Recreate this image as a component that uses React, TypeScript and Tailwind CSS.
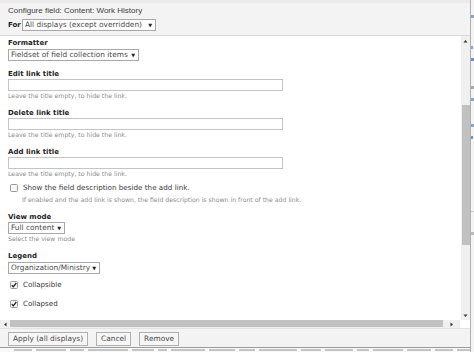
import React from "react";

const F = { fontFamily: '"DejaVu Sans", Verdana, sans-serif' };

function Select({ text, w }: { text: string; w: number }) {
  return (
    <div
      className="flex items-center justify-between h-[12px] border border-[#a8a8a8] bg-white pl-[2px] pr-[3px] text-[7.4px] leading-none text-[#4a4a4a]"
      style={{ width: w, ...F }}
    >
      <span className="whitespace-nowrap">{text}</span>
      <span className="text-[5px] text-[#222]">▼</span>
    </div>
  );
}

function Label({ children, mt }: { children: React.ReactNode; mt: string }) {
  return (
    <div className={`${mt} h-[10px] leading-[10px] text-[7px] font-bold text-[#262626]`} style={F}>
      {children}
    </div>
  );
}

function Desc({ children, cls = "" }: { children: React.ReactNode; cls?: string }) {
  return (
    <div className={`h-[10px] leading-[10px] text-[6.2px] text-[#8c8c8c] whitespace-nowrap ${cls}`} style={F}>
      {children}
    </div>
  );
}

function Input() {
  return <div className="h-[12px] w-[275px] border border-[#c4c4c4] bg-white" />;
}

function Check({ checked }: { checked: boolean }) {
  return (
    <svg width="8" height="8" viewBox="0 0 8 8" className="shrink-0">
      <rect x="0.5" y="0.5" width="7" height="7" rx="1" fill={checked ? "#f4f4f4" : "#f7f7f7"} stroke="#9a9a9a" />
      {checked && <path d="M1.8 4.2 L3.3 5.8 L6.3 2" stroke="#222" strokeWidth="1.3" fill="none" />}
    </svg>
  );
}

function Arrow({ dir }: { dir: "up" | "down" | "left" | "right" }) {
  const d =
    dir === "up"
      ? "M0.5 3.5 L2.5 1 L4.5 3.5 Z"
      : dir === "down"
      ? "M0.5 1.5 L2.5 4 L4.5 1.5 Z"
      : dir === "left"
      ? "M3.5 0.5 L1 2.5 L3.5 4.5 Z"
      : "M1.5 0.5 L4 2.5 L1.5 4.5 Z";
  return (
    <svg width="5" height="5" viewBox="0 0 5 5">
      <path d={d} fill="#333" />
    </svg>
  );
}

function Btn({ children }: { children: React.ReactNode }) {
  return (
    <div
      className="h-[14px] px-[4px] flex items-center border border-[#b0b0b0] bg-[#f6f6f6] text-[7.4px] text-[#4a4a4a] leading-none whitespace-nowrap"
      style={F}
    >
      {children}
    </div>
  );
}

export default function App() {
  const bottomDashes = [18, 30, 14, 40, 22, 9, 34, 26, 16, 38, 20, 28, 12, 30, 24, 18, 36, 22];
  return (
    <div className="w-[474px] h-[352px] overflow-hidden flex bg-[#f4f4f4]">
      <div className="w-[471px] shrink-0 flex flex-col border-r border-[#b0b0b0]">
        <div className="h-[3px] bg-[#ebebeb]" />
        <div className="h-[33px] bg-[#f3f3f3] border-b border-[#d9d9d9] px-[8px] pt-[3px]">
          <div
            className="h-[10px] leading-[10px] text-[8px] text-[#404040]"
            style={{ fontFamily: '"Liberation Sans", Arial, sans-serif' }}
          >
            Configure field: Content: Work History
          </div>
          <div className="mt-[3px] flex items-center gap-[2px]">
            <span className="text-[7px] font-bold text-[#222] w-[12px]" style={F}>
              For
            </span>
            <Select text="All displays (except overridden)" w={134} />
          </div>
        </div>
        <div className="h-[284px] flex bg-white">
          <div className="flex-1 pl-[8px] pt-[2px] flex flex-col">
            <Label mt="mt-0">Formatter</Label>
            <div className="mt-[1px]">
              <Select text="Fieldset of field collection items" w={131} />
            </div>
            <Label mt="mt-[8px]">Edit link title</Label>
            <Input />
            <Desc>Leave the title empty, to hide the link.</Desc>
            <Label mt="mt-[7px]">Delete link title</Label>
            <Input />
            <Desc>Leave the title empty, to hide the link.</Desc>
            <Label mt="mt-[7px]">Add link title</Label>
            <Input />
            <Desc>Leave the title empty, to hide the link.</Desc>
            <div className="mt-[4px] h-[10px] flex items-center pl-[2px] gap-[5px]">
              <Check checked={false} />
              <span className="text-[7.2px] text-[#383838] whitespace-nowrap" style={F}>
                Show the field description beside the add link.
              </span>
            </div>
            <Desc cls="mt-[2px] pl-[14px]">
              If enabled and the add link is shown, the field description is shown in front of the add link.
            </Desc>
            <Label mt="mt-[7px]">View mode</Label>
            <Select text="Full content" w={57} />
            <Desc cls="h-[9px] leading-[9px]">Select the view mode</Desc>
            <Label mt="mt-[7px]">Legend</Label>
            <div className="mt-[1px]">
              <Select text="Organization/Ministry" w={92} />
            </div>
            <div className="mt-[6px] h-[10px] flex items-center pl-[2px] gap-[5px]">
              <Check checked={true} />
              <span className="text-[7.1px] text-[#383838]" style={F}>
                Collapsible
              </span>
            </div>
            <div className="mt-[9px] h-[10px] flex items-center pl-[2px] gap-[5px]">
              <Check checked={true} />
              <span className="text-[7.1px] text-[#383838]" style={F}>
                Collapsed
              </span>
            </div>
          </div>
          <div className="w-[9px] bg-[#f0f0f0] flex flex-col items-center">
            <div className="h-[10px] flex items-center">
              <Arrow dir="up" />
            </div>
            <div className="mt-[59px] w-[8px] h-[140px] bg-[#c1c1c1]" />
            <div className="flex-1" />
            <div className="h-[10px] flex items-center">
              <Arrow dir="down" />
            </div>
          </div>
        </div>
        <div className="h-[8px] flex bg-[#f0f0f0]">
          <div className="w-[10px] flex items-center justify-center">
            <Arrow dir="left" />
          </div>
          <div className="w-[433px] h-[7px] bg-[#c1c1c1]" />
          <div className="flex-1 flex items-center justify-center">
            <Arrow dir="right" />
          </div>
          <div className="w-[10px] bg-white" />
        </div>
        <div className="h-[19px] bg-[#f3f3f3] border-t border-[#e2e2e2] pl-[8px] pt-[3px] flex gap-[8px]">
          <Btn>Apply (all displays)</Btn>
          <Btn>Cancel</Btn>
          <Btn>Remove</Btn>
        </div>
        <div className="h-[5px] border-t border-[#9a9a9a] bg-[#f8f8f8] flex items-start gap-[4px] pl-[14px] pt-[1px] overflow-hidden">
          {bottomDashes.map((w, i) => (
            <div key={i} className="h-[2px] bg-[#c4c4c4] shrink-0" style={{ width: w }} />
          ))}
        </div>
      </div>
      <div className="flex-1 flex flex-col overflow-hidden">
        <div className="mt-[15px] h-[3px] w-[3px] bg-[#8aa6cf]" />
        <div className="mt-[28px] h-[3px] w-[2px] bg-[#8aa6cf]" />
        <div className="mt-[9px] h-[3px] w-[3px] bg-[#6f90c4]" />
        <div className="mt-[25px] h-[3px] w-[3px] bg-[#aaaaaa]" />
        <div className="mt-[9px] h-[3px] w-[3px] bg-[#8aa6cf]" />
        <div className="mt-[23px] h-[3px] w-[3px] bg-[#8aa6cf]" />
        <div className="mt-[9px] h-[3px] w-[2px] bg-[#6f90c4]" />
        <div className="mt-[72px] h-[1px] w-[3px] bg-[#cccccc]" />
        <div className="mt-[20px] h-[3px] w-[3px] bg-[#bbbbbb]" />
      </div>
    </div>
  );
}
